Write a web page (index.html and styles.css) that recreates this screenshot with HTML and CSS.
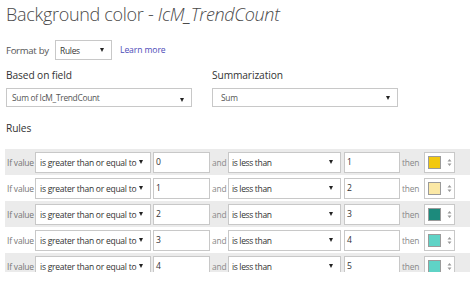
FILE: index.html
```html
<!DOCTYPE html>
<html>
<head>
<meta charset="utf-8">
<link rel="stylesheet" href="styles.css">
</head>
<body>
<div class="pane">
  <h1 class="title">Background color - <em>IcM_TrendCount</em></h1>
  <div class="format">
    <span class="format-label">Format by</span>
    <div class="select small">Rules<span class="tri"></span></div>
    <a class="learn">Learn more</a>
  </div>
  <div class="fields">
    <div class="field">
      <div class="label">Based on field</div>
      <div class="select wide">Sum of IcM_TrendCount<span class="tri low"></span></div>
    </div>
    <div class="field">
      <div class="label">Summarization</div>
      <div class="select wide sum">Sum<span class="tri"></span></div>
    </div>
  </div>
  <div class="label rules-label">Rules</div>
  <div class="rules">
    <div class="rule alt">
      <span class="if">If value</span>
      <div class="select op1">is greater than or equal to<span class="tri"></span></div>
      <div class="num">0</div>
      <span class="conj">and</span>
      <div class="select op2">is less than<span class="tri"></span></div>
      <div class="num num2">1</div>
      <span class="conj then">then</span>
      <div class="picker"><span class="swatch c1"></span><svg class="spin" width="5" height="9" viewBox="0 0 5 9"><path d="M0.5 3.5 L2.5 1 L4.5 3.5 Z M0.5 5.5 L2.5 8 L4.5 5.5 Z" fill="#999"/></svg></div>
    </div>
    <div class="rule">
      <span class="if">If value</span>
      <div class="select op1">is greater than or equal to<span class="tri"></span></div>
      <div class="num">1</div>
      <span class="conj">and</span>
      <div class="select op2">is less than<span class="tri"></span></div>
      <div class="num num2">2</div>
      <span class="conj then">then</span>
      <div class="picker"><span class="swatch c2"></span><svg class="spin" width="5" height="9" viewBox="0 0 5 9"><path d="M0.5 3.5 L2.5 1 L4.5 3.5 Z M0.5 5.5 L2.5 8 L4.5 5.5 Z" fill="#999"/></svg></div>
    </div>
    <div class="rule alt">
      <span class="if">If value</span>
      <div class="select op1">is greater than or equal to<span class="tri"></span></div>
      <div class="num">2</div>
      <span class="conj">and</span>
      <div class="select op2">is less than<span class="tri"></span></div>
      <div class="num num2">3</div>
      <span class="conj then">then</span>
      <div class="picker"><span class="swatch c3"></span><svg class="spin" width="5" height="9" viewBox="0 0 5 9"><path d="M0.5 3.5 L2.5 1 L4.5 3.5 Z M0.5 5.5 L2.5 8 L4.5 5.5 Z" fill="#999"/></svg></div>
    </div>
    <div class="rule">
      <span class="if">If value</span>
      <div class="select op1">is greater than or equal to<span class="tri"></span></div>
      <div class="num">3</div>
      <span class="conj">and</span>
      <div class="select op2">is less than<span class="tri"></span></div>
      <div class="num num2">4</div>
      <span class="conj then">then</span>
      <div class="picker"><span class="swatch c4"></span><svg class="spin" width="5" height="9" viewBox="0 0 5 9"><path d="M0.5 3.5 L2.5 1 L4.5 3.5 Z M0.5 5.5 L2.5 8 L4.5 5.5 Z" fill="#999"/></svg></div>
    </div>
    <div class="rule alt">
      <span class="if">If value</span>
      <div class="select op1">is greater than or equal to<span class="tri"></span></div>
      <div class="num">4</div>
      <span class="conj">and</span>
      <div class="select op2">is less than<span class="tri"></span></div>
      <div class="num num2">5</div>
      <span class="conj then">then</span>
      <div class="picker"><span class="swatch c5"></span><svg class="spin" width="5" height="9" viewBox="0 0 5 9"><path d="M0.5 3.5 L2.5 1 L4.5 3.5 Z M0.5 5.5 L2.5 8 L4.5 5.5 Z" fill="#999"/></svg></div>
    </div>
  </div>
</div>
</body>
</html>
```
FILE: styles.css
```css
* { box-sizing: border-box; }
html, body { margin: 0; background: #fff; }
body {
  width: 474px;
  height: 294px;
  overflow: hidden;
  font-family: "Open Sans", "Noto Sans", sans-serif;
  color: #333;
}
.pane { padding: 0 0 0 6px; }
.title {
  margin: 0;
  padding-top: 1px;
  font-size: 18px;
  line-height: 26px;
  font-weight: 300;
  color: #4a4a4a;
  letter-spacing: -0.3px;
  white-space: nowrap;
}
.title em { font-style: italic; }
.format {
  display: flex;
  align-items: center;
  margin-top: 13px;
  height: 20px;
}
.format-label {
  font-size: 9.6px;
  letter-spacing: -0.3px;
  color: #555;
  width: 49px;
  flex-shrink: 0;
  white-space: nowrap;
}
.select {
  position: relative;
  flex-shrink: 0;
  border: 1px solid #c8c8c8;
  background: #fff;
  font-size: 8.4px;
  letter-spacing: -0.25px;
  color: #333;
  display: flex;
  align-items: center;
  padding-left: 5px;
  white-space: nowrap;
  overflow: hidden;
}
.select .tri {
  position: absolute;
  right: 7px;
  top: 50%;
  margin-top: -2px;
  width: 0; height: 0;
  border-left: 2.5px solid transparent;
  border-right: 2.5px solid transparent;
  border-top: 4px solid #222;
}
.select .tri.low { margin-top: 0; }
.select.small { width: 57px; height: 20px; padding-left: 4px; }
.learn {
  margin-left: 8px;
  font-size: 8.6px;
  letter-spacing: -0.1px;
  color: #4b4bb8;
  white-space: nowrap;
}
.fields {
  display: grid;
  grid-template-columns: 186px 186px;
  column-gap: 20px;
  margin-top: 7px;
}
.label {
  font-size: 10.2px;
  line-height: 16px;
  color: #333;
  letter-spacing: -0.1px;
}
.select.wide {
  margin-top: 5px;
  height: 19px;
  padding-left: 5px;
  color: #555;
  letter-spacing: -0.3px;
}
.select.sum { padding-left: 8px; }
.rules-label { margin-top: 13px; }
.rules {
  margin-top: 13px;
  margin-left: -1px;
  width: 465px;
  height: 123px;
  overflow: hidden;
}
.rule {
  display: flex;
  align-items: center;
  height: 26px;
  padding-left: 2px;
}
.rule.alt { background: #ebebeb; }
.if {
  font-size: 8.5px;
  letter-spacing: -0.2px;
  color: #777;
  width: 28px;
  flex-shrink: 0;
  white-space: nowrap;
}
.select.op1 { width: 116px; height: 21px; padding-left: 4px; letter-spacing: -0.25px; font-size: 8.5px; }
.select.op2 { width: 113px; height: 21px; padding-left: 3px; letter-spacing: -0.35px; font-size: 8.5px; }
.num {
  flex-shrink: 0;
  margin-left: 2px;
  width: 57px;
  height: 21px;
  border: 1px solid #c8c8c8;
  background: #fff;
  font-size: 8.6px;
  display: flex;
  align-items: center;
  padding-left: 2px;
  color: #333;
}
.num2 { margin-left: 3px; width: 56px; }
.conj {
  flex-shrink: 0;
  font-size: 8.4px;
  letter-spacing: -0.2px;
  color: #888;
  padding-left: 2px;
  width: 18px;
  white-space: nowrap;
}
.conj.then { width: 24px; }
.picker {
  flex-shrink: 0;
  width: 31px;
  height: 21px;
  border: 1px solid #c8c8c8;
  background: #fff;
  display: flex;
  align-items: center;
  padding-left: 3px;
}
.swatch {
  width: 13px;
  height: 13px;
  border: 1px solid #9a9a9a;
}
.spin { margin-left: 6px; }
.c1 { background: #f2c80f; }
.c2 { background: #fbe8a5; }
.c3 { background: #1c8a7c; }
.c4 { background: #5fd3c6; }
.c5 { background: #5fd3c6; }
```
